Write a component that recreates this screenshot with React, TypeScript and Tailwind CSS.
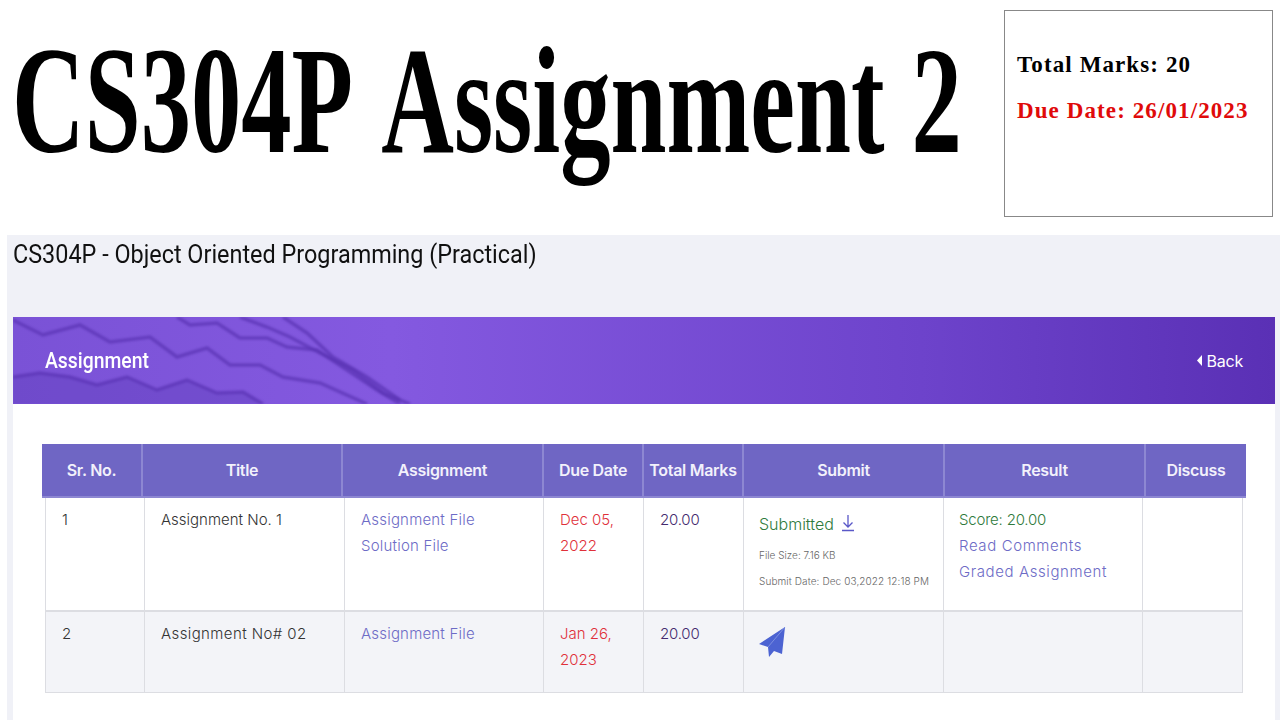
const cols = "grid-cols-[99px_200px_199px_100px_100px_200px_199px_100px]";
const heads = ["Sr. No.", "Title", "Assignment", "Due Date", "Total Marks", "Submit", "Result", "Discuss"];
const headCols = "grid-cols-[101px_200px_201px_100px_100px_201px_201px_100px]";
const cell = "border-r border-[#dcdde2] pt-[9px] pl-[16px] text-[15px] leading-[26px]";

function Plane() {
  return (
    <svg width="28" height="32" viewBox="0 0 28 32" className="mt-[4px] -ml-[2px]">
      <path d="M27 1 L1 18 L10 21 L11 31 L16 25 L24 28 Z" fill="#4c63d2" />
      <path d="M27 1 L10 21" stroke="#7d8fe0" strokeWidth="1" fill="none" />
    </svg>
  );
}

function Wave() {
  const lines = [
    "M0 3 L30 18 L67 8 L97 25 L137 20 L164 40 L194 31 L217 48 L247 48 L270 60 L307 66 L354 87",
    "M164 0 L177 8 L204 6 L227 21 L254 21 L274 30 L304 33 L334 53 L364 73 L387 87",
    "M227 0 L254 10 L277 20 L307 36 L340 53 L370 76 L397 87",
    "M270 0 L294 16 L320 40 L354 60 L387 83",
    "M0 60 L27 56 L57 60 L84 68 L114 60 L144 73 L174 63 L204 76 L230 75 L250 87",
  ];
  return (
    <svg className="absolute left-0 top-0 blur-[1px]" width="420" height="87" viewBox="0 0 420 87" fill="none">
      <path d="M0 60 L27 56 L57 60 L84 68 L114 60 L144 73 L174 63 L204 76 L230 75 L250 87 L0 87 Z" fill="#5d3bb8" fillOpacity="0.35" />
      {lines.map((d, i) => (
        <path key={i} d={d} stroke="#5a33b4" strokeOpacity="0.7" strokeWidth="3.5" />
      ))}
    </svg>
  );
}

export default function App() {
  return (
    <div className="w-[1280px] h-[720px] overflow-hidden bg-white flex flex-col font-['Inter',sans-serif]">
      <div className="h-[235px] shrink-0 flex">
        <div className="w-[1004px] shrink-0 pl-[12px] pt-[16px] overflow-hidden">
          <div className="origin-left scale-x-[0.662] whitespace-nowrap font-['Liberation_Serif',serif] font-bold text-[152px] leading-[170px] text-black">
            <span className="[word-spacing:13px]">CS304P </span>
            <span className="[word-spacing:3px]">Assignment 2</span>
          </div>
        </div>
        <div className="mt-[10px] w-[269px] h-[207px] border border-[#888888] pl-[12px] pt-[39px] font-['Liberation_Serif',serif] font-bold text-[23px] leading-[30px] tracking-[1.1px]">
          <div className="text-black">Total Marks: 20</div>
          <div className="mt-[16px] text-[#e00a0a] whitespace-nowrap">Due Date: 26/01/2023</div>
        </div>
      </div>

      <div className="ml-[7px] flex-1 bg-[#f0f1f7] pl-[6px] pr-[5px] flex flex-col">
        <div className="h-[82px] shrink-0 pt-[3px]">
          <div className="origin-left scale-x-[0.9] whitespace-nowrap font-['Roboto',sans-serif] text-[26px] leading-[32px] text-[#111111]">
            CS304P - Object Oriented Programming (Practical)
          </div>
        </div>

        <div className="relative h-[87px] shrink-0 overflow-hidden bg-[linear-gradient(90deg,#7a52d6_0%,#8459e0_30%,#6d43cb_72%,#5a30b5_100%)] flex items-center justify-between pl-[32px] pr-[32px] text-white">
          <Wave />
          <div className="relative origin-left scale-x-[0.88] font-['Roboto',sans-serif] font-medium text-[22px]">Assignment</div>
          <div className="relative flex items-center gap-[4px] text-[16px] font-normal tracking-[-0.2px]">
            <svg width="5" height="11" viewBox="0 0 5 11"><path d="M5 0 V11 L0 5.5 Z" fill="#ffffff" /></svg>
            <span>Back</span>
          </div>
        </div>

        <div className="flex-1 bg-white pt-[40px] pl-[29px]">
          <div className={`grid ${headCols} w-[1204px] h-[54px] bg-[#6f66c4] border-b-2 border-[#8d87d2]`}>
            {heads.map((h, i) => (
              <div key={h} className={`flex items-center justify-center text-[#f2f1fb] font-semibold text-[16px] tracking-[-0.3px] whitespace-nowrap ${i < 7 ? "border-r-2 border-[#8d87d2]" : ""}`}>
                {h}
              </div>
            ))}
          </div>

          <div className="ml-[3px] w-[1198px] border-l border-[#dcdde2] border-b">
            <div className={`grid ${cols} h-[114px] bg-white border-b-2 border-[#dcdde2] font-light`}>
              <div className={cell + " text-[#333333]"}>1</div>
              <div className={cell + " text-[#333333]"}>Assignment No. 1</div>
              <div className={cell + " text-[#6d6bc6] tracking-[0.2px]"}><div>Assignment File</div><div>Solution File</div></div>
              <div className={cell + " text-[#e0303a]"}>Dec 05, 2022</div>
              <div className={cell + " text-[#442a6e] -tracking-[0.2px]"}>20.00</div>
              <div className={"border-r border-[#dcdde2] pl-[15px] pt-[13px]"}>
                <div className="flex items-center gap-[8px] text-[16px] leading-[26px] font-light text-[#2f7a3c]">
                  <span>Submitted</span>
                  <svg width="12" height="18" viewBox="0 0 12 18" fill="none" stroke="#5a58c8" strokeWidth="1.3" className="-mt-[3px]">
                    <path d="M6 1 V13 M1.5 8.5 L6 13 L10.5 8.5 M0 16.5 H12" />
                  </svg>
                </div>
                <div className="mt-[11px] text-[10px] leading-[14px] text-[#666666]">File Size: 7.16 KB</div>
                <div className="mt-[12px] text-[10px] leading-[14px] tracking-[0.1px] text-[#666666] whitespace-nowrap">Submit Date: Dec 03,2022 12:18 PM</div>
              </div>
              <div className="border-r border-[#dcdde2] pt-[9px] pl-[15px] text-[15px] leading-[26px]">
                <div className="text-[#2f7a3c] -tracking-[0.2px]">Score: 20.00</div>
                <div className="text-[#6d6bc6] tracking-[0.6px]">Read Comments</div>
                <div className="text-[#6d6bc6] tracking-[0.6px] whitespace-nowrap">Graded Assignment</div>
              </div>
              <div className={cell} />
            </div>
            <div className={`grid ${cols} h-[80px] bg-[#f3f4f8] font-light`}>
              <div className={cell + " text-[#333333]"}>2</div>
              <div className={cell + " text-[#333333] tracking-[0.4px]"}>Assignment No# 02</div>
              <div className={cell + " text-[#6d6bc6] tracking-[0.2px]"}>Assignment File</div>
              <div className={cell + " text-[#e0303a]"}>Jan 26, 2023</div>
              <div className={cell + " text-[#442a6e] -tracking-[0.2px]"}>20.00</div>
              <div className={"border-r border-[#dcdde2] pl-[16px] pt-[10px]"}><Plane /></div>
              <div className={cell} />
              <div className={cell} />
            </div>
          </div>
        </div>
      </div>
    </div>
  );
}
